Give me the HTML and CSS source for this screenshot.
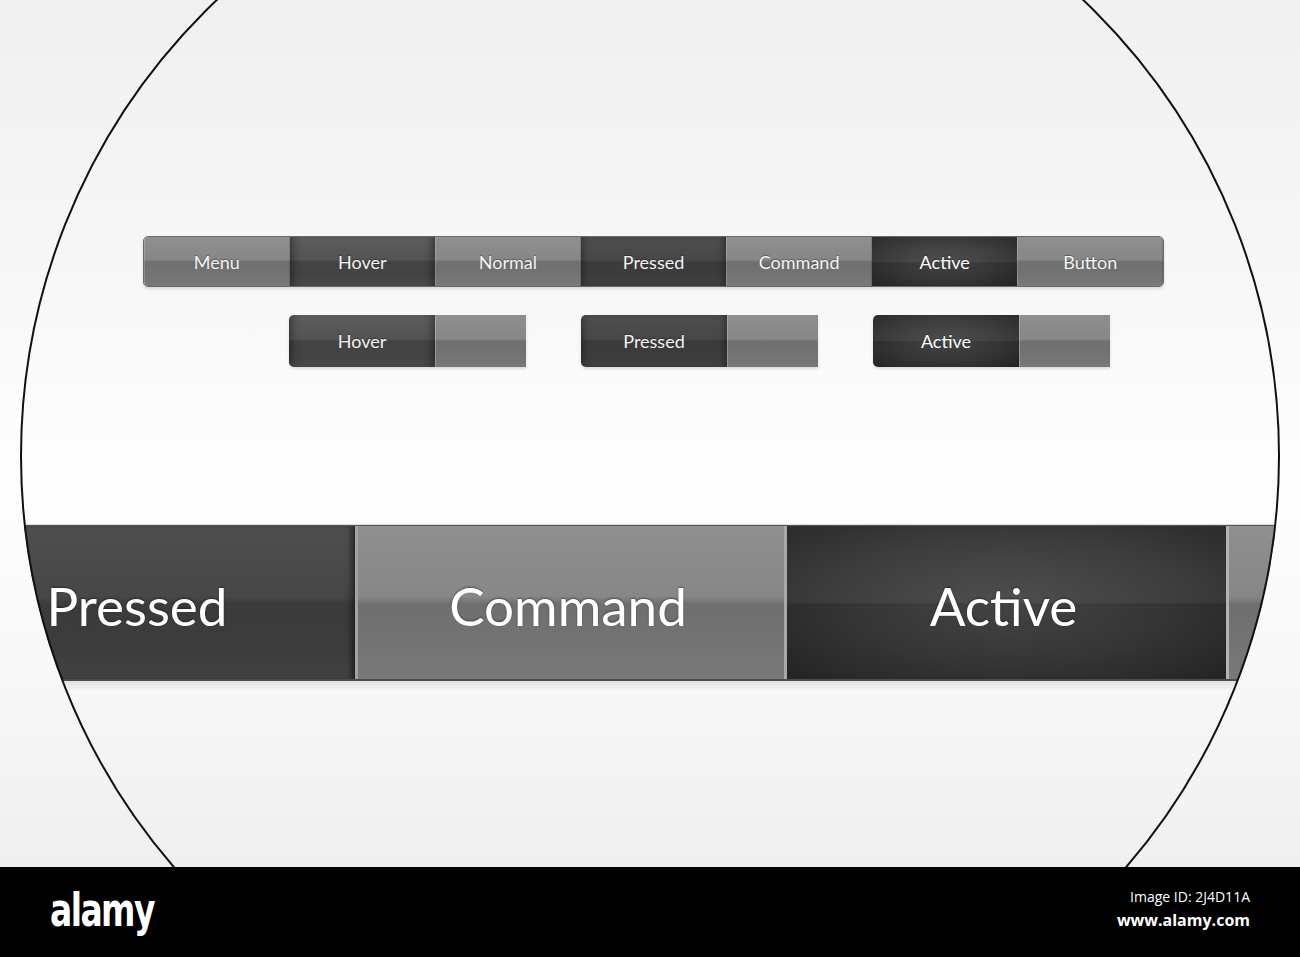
FILE: index.html
```html
<!DOCTYPE html>
<html lang="en">
<head>
  <meta charset="UTF-8" />
  <title>Menu Button States</title>
  <link rel="stylesheet" href="styles.css">
</head>
<body>

  <div class="stage">
    <div class="menu">
      <div class="seg seg-light">Menu</div>
      <div class="seg seg-hover">Hover</div>
      <div class="seg seg-light">Normal</div>
      <div class="seg seg-pressed">Pressed</div>
      <div class="seg seg-light">Command</div>
      <div class="seg seg-active">Active</div>
      <div class="seg seg-light">Button</div>
    </div>

    <div class="split-row">
      <div class="split">
        <div class="seg seg-hover">Hover</div>
        <div class="seg seg-light stub"></div>
      </div>
      <div class="split">
        <div class="seg seg-pressed">Pressed</div>
        <div class="seg seg-light stub"></div>
      </div>
      <div class="split">
        <div class="seg seg-active">Active</div>
        <div class="seg seg-light stub"></div>
      </div>
    </div>

    <!-- magnified view, clipped to the lens -->
    <div class="zoom-bar">
      <div class="big seg-pressed">Pressed</div>
      <div class="big seg-light">Command</div>
      <div class="big seg-active">Active</div>
      <div class="big seg-light"></div>
    </div>

    <div class="lens"></div>
  </div>

  <div class="footer">
    <div class="logo">alamy</div>
    <div class="info">
      <p class="image-id">Image ID: 2J4D11A</p>
      <p class="site">www.alamy.com</p>
    </div>
  </div>

</body>
</html>
```

FILE: styles.css
```css
* {
  margin: 0;
  padding: 0;
  box-sizing: border-box;
}

body {
  width: 1300px;
  height: 957px;
  overflow: hidden;
  font-family: 'Lato', 'Open Sans', sans-serif;
  background: #000;
}

.stage {
  position: relative;
  height: 867px;
  overflow: hidden;
  padding-top: 236px;
  background: linear-gradient(to bottom, #f0f0f0 0%, #f8f8f8 35%, #fefefe 55%, #f7f7f7 80%, #efefef 100%);
}

/* segment looks */
.seg {
  display: flex;
  align-items: center;
  justify-content: center;
  color: #f4f4f4;
  font-size: 18px;
  text-shadow: 0 -1px 1px rgba(0, 0, 0, 0.35);
}
.seg-light {
  background: linear-gradient(to bottom, #8f8f8f 0%, #878787 46%, #6f6f6f 51%, #737373 75%, #797979 100%);
  box-shadow: inset 1px 0 0 rgba(255, 255, 255, 0.18), inset -1px 0 0 rgba(0, 0, 0, 0.12);
}
.seg-hover {
  background: linear-gradient(to bottom, #5d5d5d 0%, #535353 46%, #434343 51%, #444444 80%, #4a4a4a 100%);
  box-shadow: inset 10px 0 10px -8px rgba(0, 0, 0, 0.45), inset -10px 0 10px -8px rgba(0, 0, 0, 0.45);
}
.seg-pressed {
  background: linear-gradient(to bottom, #4e4e4e 0%, #474747 46%, #3b3b3b 51%, #3c3c3c 80%, #424242 100%);
  box-shadow: inset 6px 0 8px -6px rgba(0, 0, 0, 0.5), inset -6px 0 8px -6px rgba(0, 0, 0, 0.6);
}
.seg-active {
  color: #ffffff;
  background:
    linear-gradient(to bottom, rgba(255, 255, 255, 0.04) 0%, rgba(255, 255, 255, 0.04) 50%, rgba(0, 0, 0, 0.06) 51%, rgba(0, 0, 0, 0) 100%),
    radial-gradient(ellipse at center, #484848 0%, #363636 55%, #232323 100%);
}

/* top menu */
.menu {
  display: flex;
  width: 1021px;
  height: 51px;
  margin-left: 143px;
  border: 1px solid #6a6a6a;
  border-radius: 5px;
  overflow: hidden;
  box-shadow: 0 2px 3px rgba(0, 0, 0, 0.12);
}
.menu .seg {
  flex: 1;
}

/* split buttons */
.split-row {
  display: flex;
  gap: 55px;
  margin-top: 28px;
  padding-left: 289px;
}
.split {
  display: flex;
  width: 237px;
  height: 52px;
  border-radius: 5px 0 0 5px;
  overflow: hidden;
  box-shadow: 0 2px 3px rgba(0, 0, 0, 0.12);
}
.split .seg {
  width: 146px;
}
.split .stub {
  width: 91px;
  box-shadow: inset 1px 0 0 rgba(255, 255, 255, 0.25);
}

/* magnified bar */
.zoom-bar {
  display: flex;
  align-items: flex-start;
  height: 166px;
  margin-top: 157px;
  overflow: hidden;
  border-top: 1px solid #dcdcdc;
  background: linear-gradient(to bottom, transparent 0, transparent 156px, rgba(0, 0, 0, 0.1) 156px, rgba(0, 0, 0, 0) 166px);
  clip-path: circle(630px at 650px -69px);
}
.big {
  flex: none;
  display: flex;
  align-items: center;
  justify-content: center;
  height: 156px;
  border-top: 1px solid #555;
  border-bottom: 2px solid #4c4c4c;
  color: #ffffff;
  font-size: 53px;
  text-shadow: 0 -1px 2px rgba(0, 0, 0, 0.4);
  padding-top: 6px;
}
.big:nth-child(1) {
  width: 430px;
  margin-left: -75px;
  padding-right: 6px;
}
.big:nth-child(2) {
  width: 432px;
  padding-right: 6px;
  box-shadow: inset 3px 0 0 #a2a2a2, inset -3px 0 0 #a8a8a8;
}
.big:nth-child(3) {
  width: 439px;
  padding-right: 6px;
}
.big:nth-child(4) {
  width: 430px;
  box-shadow: inset 3px 0 0 #b4b4b4;
}
.big.seg-pressed {
  box-shadow: inset -6px 0 6px -3px rgba(0, 0, 0, 0.55);
}

/* lens outline */
.lens {
  position: absolute;
  left: 20px;
  top: -174px;
  width: 1260px;
  height: 1260px;
  border: 2px solid #111;
  border-radius: 50%;
  pointer-events: none;
}

/* footer band */
.footer {
  display: flex;
  justify-content: space-between;
  align-items: center;
  height: 90px;
  padding: 0 50px;
  background: #000;
  color: #fff;
}
.logo {
  font-family: 'DejaVu Sans Condensed', 'DejaVu Sans', sans-serif;
  font-weight: bold;
  font-size: 47px;
  letter-spacing: -2px;
  transform: scaleX(0.78);
  transform-origin: left center;
  margin-top: -6px;
}
.info {
  text-align: right;
  font-family: 'Open Sans', sans-serif;
  margin-top: -4px;
}
.image-id {
  font-size: 14px;
  line-height: 20px;
}
.site {
  font-size: 16px;
  font-weight: bold;
  line-height: 26px;
}
```
